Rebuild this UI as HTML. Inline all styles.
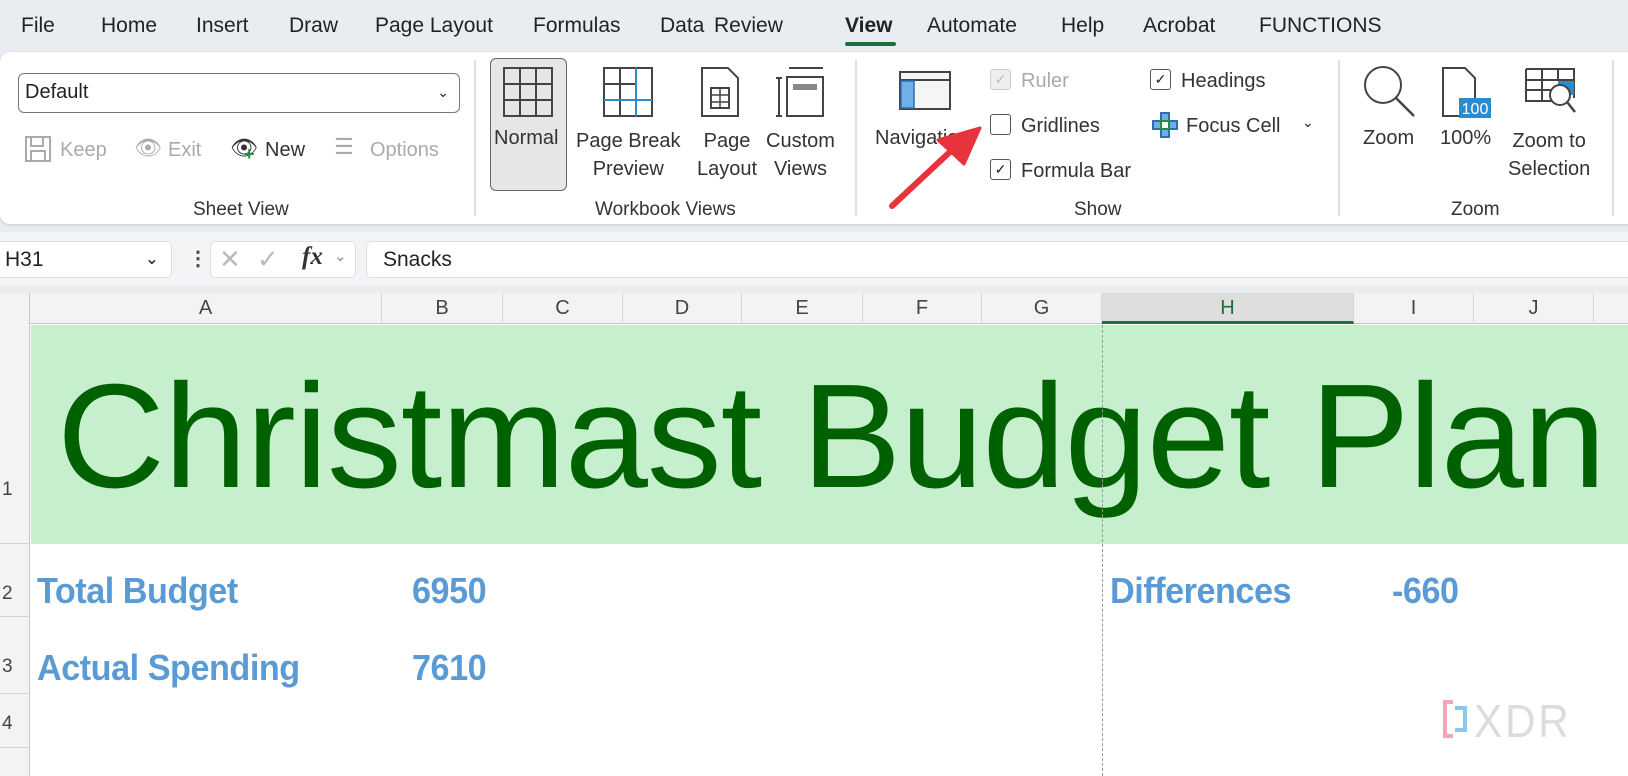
<!DOCTYPE html>
<html><head><meta charset="utf-8"><style>
*{margin:0;padding:0;box-sizing:border-box}
body{width:1628px;height:776px;overflow:hidden;background:#e9edf1;font-family:"Liberation Sans",sans-serif;color:#222;position:relative}
.a{position:absolute;white-space:nowrap}
.tab{position:absolute;top:14px;font-size:21px;color:#222}
.lbl{font-size:19px;color:#333}
.chk{position:absolute;width:21px;height:21px;border:1.6px solid #555;border-radius:3px;background:#fff}
.col{position:absolute;top:293px;height:31px;border-right:1px solid #d4d4d4;font-size:20px;color:#444;text-align:center;line-height:31px}
.rn{position:absolute;left:0;width:30px;font-size:19px;color:#444;padding-left:2px;border-bottom:1px solid #d4d4d4}
.blue{position:absolute;font-size:36px;font-weight:bold;color:#5b9bd5;letter-spacing:-0.5px;transform:scaleX(0.95);transform-origin:0 0}
</style></head><body>
<div class="tab" style="left:21px">File</div>
<div class="tab" style="left:101px">Home</div>
<div class="tab" style="left:196px">Insert</div>
<div class="tab" style="left:289px">Draw</div>
<div class="tab" style="left:375px">Page Layout</div>
<div class="tab" style="left:533px">Formulas</div>
<div class="tab" style="left:660px">Data</div>
<div class="tab" style="left:714px">Review</div>
<div class="tab" style="left:845px;font-weight:bold">View</div>
<div class="a" style="left:845px;top:42px;width:51px;height:4px;background:#1e6e3c;border-radius:2px"></div>
<div class="tab" style="left:927px">Automate</div>
<div class="tab" style="left:1061px">Help</div>
<div class="tab" style="left:1143px">Acrobat</div>
<div class="tab" style="left:1259px">FUNCTIONS</div>

<div class="a" style="left:0;top:52px;width:1640px;height:172px;background:#fff;border-radius:10px;box-shadow:0 1px 3px rgba(0,0,0,.15)"></div>
<div class="a" style="left:18px;top:73px;width:442px;height:40px;border:1.5px solid #777;border-radius:6px;font-size:20px;line-height:37px;padding-left:6px">Default<span style="position:absolute;right:10px;top:0;font-size:14px">&#8964;</span></div>
<svg class="a" style="left:24px;top:135px" width="28" height="28" viewBox="0 0 28 28"><rect x="2" y="2" width="24" height="24" fill="none" stroke="#aaa" stroke-width="2"/><rect x="7" y="2" width="12" height="9" fill="none" stroke="#aaa" stroke-width="2"/><rect x="7" y="16" width="14" height="10" fill="none" stroke="#aaa" stroke-width="2"/></svg>
<div class="a lbl" style="left:60px;top:139px;color:#aaa;font-size:20px">Keep</div>
<div class="a" style="left:134px;top:135px;font-size:22px;color:#aaa">&#128065;</div>
<div class="a lbl" style="left:168px;top:139px;color:#aaa;font-size:20px">Exit</div>
<div class="a" style="left:230px;top:135px;font-size:22px;color:#333">&#128065;</div>
<div class="a" style="left:244px;top:144px;font-size:18px;color:#2a8a3e;font-weight:bold">+</div>
<div class="a lbl" style="left:265px;top:139px;font-size:20px">New</div>
<div class="a" style="left:334px;top:134px;font-size:22px;color:#aaa">&#9776;</div>
<div class="a lbl" style="left:370px;top:139px;color:#aaa;font-size:20px">Options</div>
<div class="a lbl" style="left:193px;top:199px">Sheet View</div>
<div class="a" style="left:474px;top:60px;width:2px;height:156px;background:#e0e0e0"></div>
<div class="a" style="left:490px;top:58px;width:77px;height:133px;background:#e6e6e6;border:1.5px solid #666;border-radius:6px"></div>
<svg class="a" style="left:503px;top:67px" width="50" height="50"><rect x="1" y="1" width="48" height="48" fill="none" stroke="#444" stroke-width="2"/><path d="M17 1V49M33 1V49M1 17H49M1 33H49" stroke="#444" stroke-width="2"/></svg>
<div class="a lbl" style="left:494px;top:127px;font-size:20px">Normal</div>
<svg class="a" style="left:603px;top:67px" width="50" height="50"><rect x="1" y="1" width="48" height="48" fill="none" stroke="#444" stroke-width="2"/><path d="M17 1V49M1 17H33" stroke="#444" stroke-width="2"/><path d="M33 1V49M1 33H49" stroke="#2b8ad0" stroke-width="2"/></svg>
<div class="a lbl" style="left:576px;top:127px;font-size:20px;text-align:center;line-height:28px">Page Break<br>Preview</div>
<svg class="a" style="left:700px;top:66px" width="40" height="52"><path d="M2 2H28L38 12V50H2Z" fill="none" stroke="#444" stroke-width="2"/><rect x="11" y="22" width="18" height="20" fill="none" stroke="#444" stroke-width="2"/><path d="M11 29H29M11 36H29M20 22V42" stroke="#444" stroke-width="1.5"/></svg>
<div class="a lbl" style="left:697px;top:127px;font-size:20px;text-align:center;line-height:28px">Page<br>Layout</div>
<svg class="a" style="left:775px;top:64px" width="50" height="55"><path d="M14 4H48M4 14V52M1 14H7M1 52H7" stroke="#444" stroke-width="2"/><rect x="12" y="13" width="36" height="39" fill="none" stroke="#444" stroke-width="2"/><rect x="18" y="20" width="24" height="6" fill="#888"/></svg>
<div class="a lbl" style="left:766px;top:127px;font-size:20px;text-align:center;line-height:28px">Custom<br>Views</div>
<div class="a lbl" style="left:595px;top:199px">Workbook Views</div>
<div class="a" style="left:855px;top:60px;width:2px;height:156px;background:#e0e0e0"></div>
<svg class="a" style="left:899px;top:71px" width="52" height="40"><rect x="1" y="1" width="50" height="37" fill="#f5f5f5" stroke="#444" stroke-width="2"/><path d="M1 9H51" stroke="#444" stroke-width="2"/><rect x="2" y="10" width="13" height="27" fill="#6fb0e8" stroke="#2b6fb0" stroke-width="1.5"/></svg>
<div class="a lbl" style="left:875px;top:127px;font-size:20px">Navigatio</div>
<div class="chk" style="left:990px;top:69px;border-color:#ccc;background:#eee;color:#bbb;font-size:14px;text-align:center;line-height:18px">&#10003;</div>
<div class="a lbl" style="left:1021px;top:70px;color:#aaa;font-size:20px">Ruler</div>
<div class="chk" style="left:990px;top:114px"></div>
<div class="a lbl" style="left:1021px;top:115px;font-size:20px">Gridlines</div>
<div class="chk" style="left:990px;top:159px;font-size:14px;text-align:center;line-height:18px">&#10003;</div>
<div class="a lbl" style="left:1021px;top:160px;font-size:20px">Formula Bar</div>
<div class="chk" style="left:1150px;top:69px;font-size:14px;text-align:center;line-height:18px">&#10003;</div>
<div class="a lbl" style="left:1181px;top:70px;font-size:20px">Headings</div>
<svg class="a" style="left:1152px;top:112px" width="26" height="26"><path d="M9 1H17V9H25V17H17V25H9V17H1V9H9Z" fill="#6fb0e8" stroke="#2b6fb0" stroke-width="2"/><rect x="9" y="9" width="8" height="8" fill="#fff" stroke="#2a8a3e" stroke-width="2"/></svg>
<div class="a lbl" style="left:1186px;top:115px;font-size:20px">Focus Cell</div>
<div class="a" style="left:1302px;top:114px;font-size:14px">&#8964;</div>
<div class="a lbl" style="left:1074px;top:199px">Show</div>
<div class="a" style="left:1338px;top:60px;width:2px;height:156px;background:#e0e0e0"></div>
<svg class="a" style="left:1362px;top:64px" width="56" height="56"><circle cx="21" cy="21" r="18" fill="none" stroke="#444" stroke-width="2"/><path d="M34 34L52 52" stroke="#444" stroke-width="2.5"/></svg>
<div class="a lbl" style="left:1363px;top:127px;font-size:20px">Zoom</div>
<svg class="a" style="left:1441px;top:66px" width="52" height="54"><path d="M2 2H24L34 12V50H2Z" fill="#fff" stroke="#444" stroke-width="2"/><rect x="18" y="32" width="32" height="20" fill="#2b8ad0"/><text x="34" y="48" font-size="16" fill="#fff" text-anchor="middle" font-family="Liberation Sans">100</text></svg>
<div class="a lbl" style="left:1440px;top:127px;font-size:20px">100%</div>
<svg class="a" style="left:1525px;top:68px" width="52" height="52"><path d="M1 1H49V30M1 1V33H30M1 12H49M1 22H30M17 1V33M33 1V12" fill="none" stroke="#444" stroke-width="2"/><rect x="33" y="13" width="16" height="14" fill="#2b8ad0"/><circle cx="35" cy="27" r="10" fill="#fff" stroke="#444" stroke-width="2"/><path d="M42 34L50 44" stroke="#444" stroke-width="2.5"/></svg>
<div class="a lbl" style="left:1508px;top:127px;font-size:20px;text-align:center;line-height:28px">Zoom to<br>Selection</div>
<div class="a lbl" style="left:1451px;top:199px">Zoom</div>
<div class="a" style="left:1612px;top:60px;width:2px;height:156px;background:#e0e0e0"></div>
<svg class="a" style="left:880px;top:120px" width="110" height="95"><path d="M12 86L72 30" stroke="#e8323c" stroke-width="6" stroke-linecap="round"/><path d="M100 8L58 20L84 44Z" fill="#e8323c" stroke="#e8323c" stroke-width="3" stroke-linejoin="round"/></svg>

<div class="a" style="left:0;top:232px;width:1628px;height:54px;background:#f2f4f6"></div>
<div class="a" style="left:-4px;top:241px;width:176px;height:37px;background:#fff;border:1px solid #ddd;border-radius:5px;font-size:21px;line-height:35px;padding-left:8px">H31<span style="position:absolute;right:12px;top:-1px;font-size:17px">&#8964;</span></div>
<div class="a" style="left:188px;top:246px;font-size:20px;font-weight:bold;color:#444">&#8942;</div>
<div class="a" style="left:210px;top:241px;width:146px;height:37px;background:#fff;border:1px solid #ddd;border-radius:5px"></div>
<div class="a" style="left:219px;top:244px;font-size:26px;color:#bbb">&#10005;</div>
<div class="a" style="left:257px;top:244px;font-size:26px;color:#bbb">&#10003;</div>
<div class="a" style="left:302px;top:243px;font-size:25px;font-style:italic;font-family:'Liberation Serif',serif;font-weight:bold;color:#333">fx</div>
<div class="a" style="left:334px;top:247px;font-size:15px;color:#888">&#8964;</div>
<div class="a" style="left:366px;top:241px;width:1280px;height:37px;background:#fff;border:1px solid #ddd;border-radius:5px;font-size:21px;line-height:35px;padding-left:16px">Snacks</div>

<div class="a" style="left:0;top:293px;width:1628px;height:483px;background:#fff"></div>
<div class="a" style="left:0;top:293px;width:1628px;height:31px;background:#f3f3f3;border-bottom:1px solid #c8c8c8"></div>
<div class="a" style="left:0;top:293px;width:30px;height:483px;background:#f3f3f3;border-right:1px solid #c8c8c8"></div>
<div class="col" style="left:30px;width:352px">A</div>
<div class="col" style="left:382px;width:121px">B</div>
<div class="col" style="left:503px;width:120px">C</div>
<div class="col" style="left:623px;width:119px">D</div>
<div class="col" style="left:742px;width:121px">E</div>
<div class="col" style="left:863px;width:119px">F</div>
<div class="col" style="left:982px;width:120px">G</div>
<div class="col" style="left:1102px;width:252px;background:#dedede;color:#1e6e3c;border-bottom:3px solid #1e6e3c">H</div>
<div class="col" style="left:1354px;width:120px">I</div>
<div class="col" style="left:1474px;width:120px">J</div>
<div class="col" style="left:1594px;width:40px"></div>
<div class="rn" style="top:325px;height:219px;line-height:330px">1</div>
<div class="rn" style="top:544px;height:73px;line-height:100px">2</div>
<div class="rn" style="top:617px;height:77px;line-height:100px">3</div>
<div class="rn" style="top:694px;height:54px;line-height:60px">4</div>
<div class="a" style="left:31px;top:325px;width:1600px;height:219px;background:#c6efce;overflow:hidden">
<div class="a" style="left:26px;top:27px;font-size:148px;line-height:170px;color:#006100;transform:scaleX(1.01);transform-origin:0 0;letter-spacing:-1px">Christmast Budget Plan</div>
</div>
<div class="a" style="left:1102px;top:325px;height:451px;border-left:1px dashed #999"></div>
<div class="blue" style="left:37px;top:570px">Total Budget</div>
<div class="blue" style="left:412px;top:570px">6950</div>
<div class="blue" style="left:37px;top:647px">Actual Spending</div>
<div class="blue" style="left:412px;top:647px">7610</div>
<div class="blue" style="left:1110px;top:570px">Differences</div>
<div class="blue" style="left:1392px;top:570px">-660</div>
<div class="a" style="left:1443px;top:700px;width:10px;height:38px;border:4px solid #f2a7b6;border-right:none"></div>
<div class="a" style="left:1455px;top:706px;width:12px;height:26px;border:4px solid #8cc8ee;border-left:none"></div>
<div class="a" style="left:1474px;top:694px;font-size:46px;color:#dcdcdc;letter-spacing:3px;transform:scaleX(0.92);transform-origin:0 0">XDR</div>
</body></html>
